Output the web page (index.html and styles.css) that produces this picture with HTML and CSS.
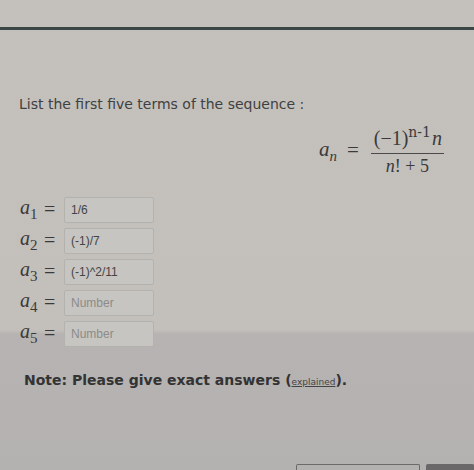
FILE: index.html
```html
<!DOCTYPE html>
<html>
<head>
<meta charset="utf-8">
<link rel="stylesheet" href="styles.css">
</head>
<body>
<div class="page">
  <div class="rule"></div>
  <div class="content">
    <p class="prompt">List the first five terms of the sequence :</p>
    <div class="formula">
      <span class="lhs"><i>a</i><sub><i>n</i></sub></span>
      <span class="eq">=</span>
      <span class="frac">
        <span class="num">(−1)<sup>n-1</sup><i>n</i></span>
        <span class="den"><i>n</i>! + 5</span>
      </span>
    </div>
    <div class="rows">
      <div class="row"><span class="lbl"><i>a</i><sub>1</sub></span><span class="eq">=</span><span class="box">1/6</span></div>
      <div class="row"><span class="lbl"><i>a</i><sub>2</sub></span><span class="eq">=</span><span class="box">(-1)/7</span></div>
      <div class="row"><span class="lbl"><i>a</i><sub>3</sub></span><span class="eq">=</span><span class="box">(-1)^2/11</span></div>
      <div class="row"><span class="lbl"><i>a</i><sub>4</sub></span><span class="eq">=</span><span class="box ph">Number</span></div>
      <div class="row"><span class="lbl"><i>a</i><sub>5</sub></span><span class="eq">=</span><span class="box ph">Number</span></div>
    </div>
    <p class="note">Note: Please give exact answers (<span class="link">explained</span>).</p>
  </div>
  <div class="footer">
    <span class="btn"></span>
    <span class="btn dark"></span>
  </div>
</div>
</body>
</html>
```
FILE: styles.css
```css
html, body {
  margin: 0;
  padding: 0;
}
body {
  width: 474px;
  height: 470px;
  overflow: hidden;
  background: linear-gradient(to bottom, #c4c1bc 0, #c3c0bc 330px, #b6b3b2 334px, #b4b1b1 470px);
  font-family: "DejaVu Sans", sans-serif;
  color: #3c3c3c;
}
.page {
  height: 470px;
  display: flex;
  flex-direction: column;
  padding-top: 27px;
  box-sizing: border-box;
}
.rule {
  height: 3px;
  background: #3a4744;
}
.content {
  flex: 1;
  padding: 0 30px 0 19px;
}
.prompt {
  margin: 64px 0 0 0;
  font-size: 14px;
  line-height: 20px;
  color: #404040;
}
.formula {
  display: flex;
  justify-content: flex-end;
  align-items: center;
  margin-top: 10px;
  font-family: "Liberation Serif", serif;
  font-size: 20px;
  color: #3a3a3a;
}
.lhs {
  font-size: 21px;
}
.lhs sub, .lbl sub {
  font-size: 15px;
  vertical-align: -5px;
}
.formula .eq {
  margin: 0 12px 0 10px;
  font-size: 21px;
}
.frac {
  display: flex;
  flex-direction: column;
  align-items: center;
}
.num {
  padding: 0 2px 3px 3px;
  border-bottom: 1px solid #4a4a4a;
}
.num sup {
  font-family: "DejaVu Serif", serif;
  font-size: 14px;
  vertical-align: 8px;
  margin-right: 1px;
}
.den {
  padding-top: 2px;
  font-size: 18px;
}
.rows {
  margin-top: 19px;
  display: flex;
  flex-direction: column;
  gap: 4px;
}
.row {
  display: flex;
  align-items: center;
  height: 27px;
}
.lbl {
  width: 24px;
  padding-left: 1px;
  font-family: "Liberation Serif", serif;
  font-size: 20px;
  color: #3a3a3a;
}
.row .eq {
  width: 20px;
  font-family: "Liberation Serif", serif;
  font-size: 20px;
  color: #3a3a3a;
}
.box {
  width: 90px;
  height: 26px;
  box-sizing: border-box;
  border: 1px solid #b4b2ae;
  border-radius: 2px;
  background: #c7c5c1;
  font-family: "Liberation Sans", sans-serif;
  font-size: 12px;
  line-height: 24px;
  padding-left: 6px;
  color: #444;
}
.box.ph {
  color: #8c8b89;
}
.note {
  margin: 25px 0 0 5px;
  font-size: 14px;
  font-weight: bold;
  color: #333;
}
.link {
  font-size: 9px;
  font-weight: normal;
  text-decoration: underline;
  color: #444;
}
.footer {
  display: flex;
  justify-content: flex-end;
  gap: 6px;
  height: 6px;
}
.btn {
  width: 122px;
  border: 1px solid #6c6a69;
  border-bottom: 0;
  border-radius: 2px 2px 0 0;
}
.btn.dark {
  width: 46px;
  background: #6a6868;
  border-color: #6a6868;
}
```
